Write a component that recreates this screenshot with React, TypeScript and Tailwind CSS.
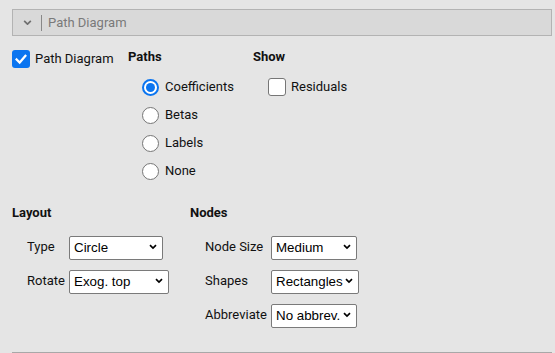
import { useState } from "react";

const font = "font-['Roboto','Liberation_Sans',sans-serif]";

function Checkbox({ checked, label, onChange }: { checked: boolean; label: string; onChange: () => void }) {
  return (
    <label className="flex cursor-pointer items-center gap-[5px]" onClick={onChange}>
      {checked ? (
        <span className="flex h-[18px] w-[18px] items-center justify-center rounded-[3px] bg-[#0b75f0]">
          <svg viewBox="0 0 16 16" className="h-[14px] w-[14px]">
            <path d="M3 8.5 L6.5 12 L13 4.5" fill="none" stroke="white" strokeWidth="2.6" strokeLinecap="square" />
          </svg>
        </span>
      ) : (
        <span className="h-[18px] w-[18px] rounded-[3px] border border-[#767676] bg-white" />
      )}
      <span className="text-[13px] text-[#111]">{label}</span>
    </label>
  );
}

function Radio({ checked, label, onChange }: { checked: boolean; label: string; onChange: () => void }) {
  return (
    <label className="flex h-[28px] cursor-pointer items-center gap-[6px]" onClick={onChange}>
      {checked ? (
        <span className="flex h-[17px] w-[17px] items-center justify-center rounded-full border-2 border-[#0b75f0] bg-white">
          <span className="h-[9px] w-[9px] rounded-full bg-[#0b75f0]" />
        </span>
      ) : (
        <span className="h-[17px] w-[17px] rounded-full border border-[#767676] bg-white" />
      )}
      <span className="text-[13px] text-[#111]">{label}</span>
    </label>
  );
}

function Select({ value, options, width }: { value: string; options: string[]; width: string }) {
  const [v, setV] = useState(value);
  return (
    <div className={`relative h-[24px] ${width}`}>
      <select
        value={v}
        onChange={(e) => setV(e.target.value)}
        className="h-full w-full appearance-none rounded-[2px] border border-[#7a7a7a] bg-white pl-[4px] font-['Liberation_Sans',Arial,sans-serif] text-[13.33px] text-black outline-none"
      >
        {options.map((o) => (
          <option key={o}>{o}</option>
        ))}
      </select>
      <svg viewBox="0 0 10 8" className="pointer-events-none absolute right-[5px] top-[9px] h-[6px] w-[10px]">
        <path d="M1 1.5 L5 5.5 L9 1.5" fill="none" stroke="black" strokeWidth="2.2" />
      </svg>
    </div>
  );
}

function Row({ label, labelWidth, children }: { label: string; labelWidth: string; children: React.ReactNode }) {
  return (
    <div className="flex items-center">
      <span className={`${labelWidth} text-[13px] text-[#111]`}>{label}</span>
      {children}
    </div>
  );
}

export default function App() {
  const [diagram, setDiagram] = useState(true);
  const [paths, setPaths] = useState("Coefficients");
  const [residuals, setResiduals] = useState(false);

  return (
    <div className={`h-[353px] w-[555px] overflow-hidden bg-[#e5e5e5] pl-[12px] pr-[3px] pt-[9px] ${font}`}>
      <div className="flex h-[27px] items-center border border-[#b3b3b3] bg-[#d9d9d9]">
        <svg viewBox="0 0 10 6" className="ml-[10px] h-[5px] w-[9px]">
          <path d="M1 1 L5 5 L9 1" fill="none" stroke="#6f6f6f" strokeWidth="2" />
        </svg>
        <span className="ml-[9px] h-[16px] w-px bg-[#888]" />
        <span className="ml-[6px] text-[13px] text-[#7a7a7a]">Path Diagram</span>
      </div>

      <div className="mt-[12px] flex">
        <div className="w-[116px] pt-px">
          <Checkbox checked={diagram} label="Path Diagram" onChange={() => setDiagram(!diagram)} />
        </div>
        <div className="w-[125px]">
          <div className="text-[13px] font-bold leading-[18px] text-[#111]">Paths</div>
          <div className="ml-[14px] mt-[7px] flex flex-col">
            {["Coefficients", "Betas", "Labels", "None"].map((p) => (
              <Radio key={p} checked={paths === p} label={p} onChange={() => setPaths(p)} />
            ))}
          </div>
        </div>
        <div>
          <div className="text-[13px] font-bold leading-[18px] text-[#111]">Show</div>
          <div className="ml-[15px] mt-[7px] flex h-[28px] items-center">
            <Checkbox checked={residuals} label="Residuals" onChange={() => setResiduals(!residuals)} />
          </div>
        </div>
      </div>

      <div className="mt-[19px] flex">
        <div className="w-[178px]">
          <div className="text-[13px] font-bold leading-[18px] text-[#111]">Layout</div>
          <div className="ml-[15px] mt-[13px] flex flex-col gap-[10px]">
            <Row label="Type" labelWidth="w-[42px]">
              <Select value="Circle" options={["Circle", "Tree", "Spring"]} width="w-[94px]" />
            </Row>
            <Row label="Rotate" labelWidth="w-[42px]">
              <Select value="Exog. top" options={["Exog. top", "Exog. left", "Exog. bottom"]} width="w-[100px]" />
            </Row>
          </div>
        </div>
        <div>
          <div className="text-[13px] font-bold leading-[18px] text-[#111]">Nodes</div>
          <div className="ml-[15px] mt-[13px] flex flex-col gap-[10px]">
            <Row label="Node Size" labelWidth="w-[66px]">
              <Select value="Medium" options={["Small", "Medium", "Large"]} width="w-[86px]" />
            </Row>
            <Row label="Shapes" labelWidth="w-[66px]">
              <Select value="Rectangles" options={["Rectangles", "Circles"]} width="w-[88px]" />
            </Row>
            <Row label="Abbreviate" labelWidth="w-[66px]">
              <Select value="No abbrev." options={["No abbrev.", "3 chars", "5 chars"]} width="w-[86px]" />
            </Row>
          </div>
        </div>
      </div>

      <div className="mt-[25px] h-[10px] border-t border-[#a8a8a8] bg-[#d9d9d9]" />
    </div>
  );
}
